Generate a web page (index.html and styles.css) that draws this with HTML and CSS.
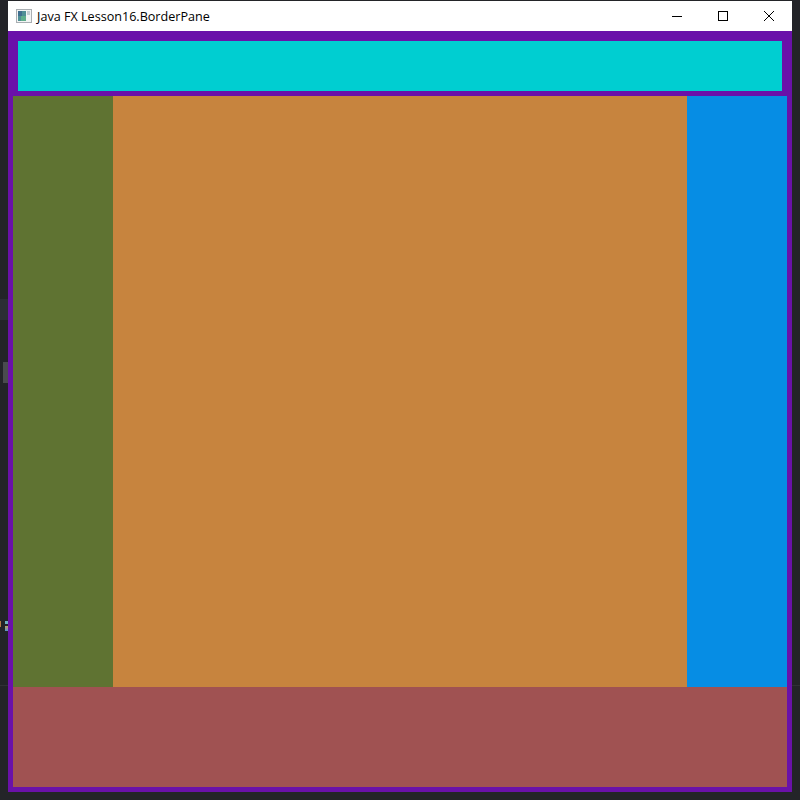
FILE: index.html
```html
<!DOCTYPE html>
<html>
<head>
  <meta charset="utf-8">
  <title>Java FX Lesson16.BorderPane</title>
  <link rel="stylesheet" href="styles.css">
</head>
<body>
  <!-- editor behind the window, only slivers show -->
  <div class="behind-panel"></div>
  <div class="behind-thumb"></div>
  <div class="behind-line-left"></div>
  <div class="behind-line-right"></div>
  <div class="behind-icon"></div>
  <div class="behind-mark"></div>

  <div class="window">
    <div class="titlebar">
      <svg class="app-icon" width="16" height="16" viewBox="0 0 16 16">
        <rect x="0.5" y="1.5" width="15" height="13" fill="#f2f4f4" stroke="#a9aeb2"/>
        <rect x="2" y="3" width="8" height="10" fill="#4f8f96"/>
        <rect x="2" y="3" width="4" height="5" fill="#3f6f8f"/>
        <rect x="5" y="8" width="5" height="5" fill="#5fae8c"/>
        <rect x="11" y="3" width="3" height="4" fill="#c3ccd2"/>
      </svg>
      <span class="title">Java FX Lesson16.BorderPane</span>
      <div class="controls">
        <div class="control">
          <svg width="12" height="12" viewBox="0 0 12 12"><path d="M1 6.5H11" stroke="#000" fill="none"/></svg>
        </div>
        <div class="control">
          <svg width="12" height="12" viewBox="0 0 12 12"><rect x="1.5" y="1.5" width="9" height="9" stroke="#000" fill="none"/></svg>
        </div>
        <div class="control">
          <svg width="12" height="12" viewBox="0 0 12 12"><path d="M1 1L11 11M11 1L1 11" stroke="#000" fill="none"/></svg>
        </div>
      </div>
    </div>

    <div class="border-pane">
      <div class="pane-top"><div class="top-box"></div></div>
      <div class="pane-middle">
        <div class="pane-left"></div>
        <div class="pane-center"></div>
        <div class="pane-right"></div>
      </div>
      <div class="pane-bottom"></div>
    </div>
  </div>
</body>
</html>
```

FILE: styles.css
```css
html, body {
  height: 100%;
}

body {
  margin: 0;
  padding: 1px 8px 0;
  box-sizing: border-box;
  overflow: hidden;
  background: #232428;
  font-family: "Open Sans", "Noto Sans", sans-serif;
  position: relative;
}

.behind-panel {
  position: absolute;
  left: 0;
  top: 299px;
  width: 8px;
  height: 21px;
  background: #2b2e35;
}

.behind-thumb {
  position: absolute;
  left: 3px;
  top: 362px;
  width: 5px;
  height: 21px;
  background: #4a4b4f;
}

.behind-line-left {
  position: absolute;
  left: 0;
  top: 685px;
  width: 8px;
  height: 1px;
  background: #303136;
}

.behind-line-right {
  position: absolute;
  right: 0;
  top: 685px;
  width: 8px;
  height: 1px;
  background: #303136;
}

.behind-icon {
  position: absolute;
  left: 5px;
  top: 621px;
  width: 3px;
  height: 10px;
  background: linear-gradient(#6fb0c0 30%, #232428 30%, #232428 50%, #c0a060 50%, #5a90c8);
}

.behind-mark {
  position: absolute;
  left: 0;
  top: 621px;
  width: 1px;
  height: 6px;
  background: #b5793f;
}

.window {
  width: 784px;
  height: 791px;
  display: flex;
  flex-direction: column;
}

.titlebar {
  height: 30px;
  background: #fff;
  display: flex;
  align-items: center;
  flex-shrink: 0;
}

.app-icon {
  margin-left: 8px;
  margin-right: 5px;
}

.title {
  font-size: 12.6px;
  color: #000;
  white-space: nowrap;
}

.controls {
  margin-left: auto;
  display: flex;
}

.control {
  width: 46px;
  height: 30px;
  display: flex;
  align-items: center;
  justify-content: center;
}

.border-pane {
  flex: 1;
  display: flex;
  flex-direction: column;
  background: #6a11a9;
  padding: 0 5px 5px;
}

.pane-top {
  height: 65px;
  padding: 10px 5px 5px;
  box-sizing: border-box;
}

.top-box {
  height: 50px;
  background: #00ced1;
}

.pane-middle {
  flex: 1;
  display: flex;
}

.pane-left {
  width: 100px;
  background: #5f7332;
}

.pane-center {
  flex: 1;
  background: #c7843e;
}

.pane-right {
  width: 100px;
  background: #068de4;
}

.pane-bottom {
  height: 100px;
  background: #a05252;
}
```
